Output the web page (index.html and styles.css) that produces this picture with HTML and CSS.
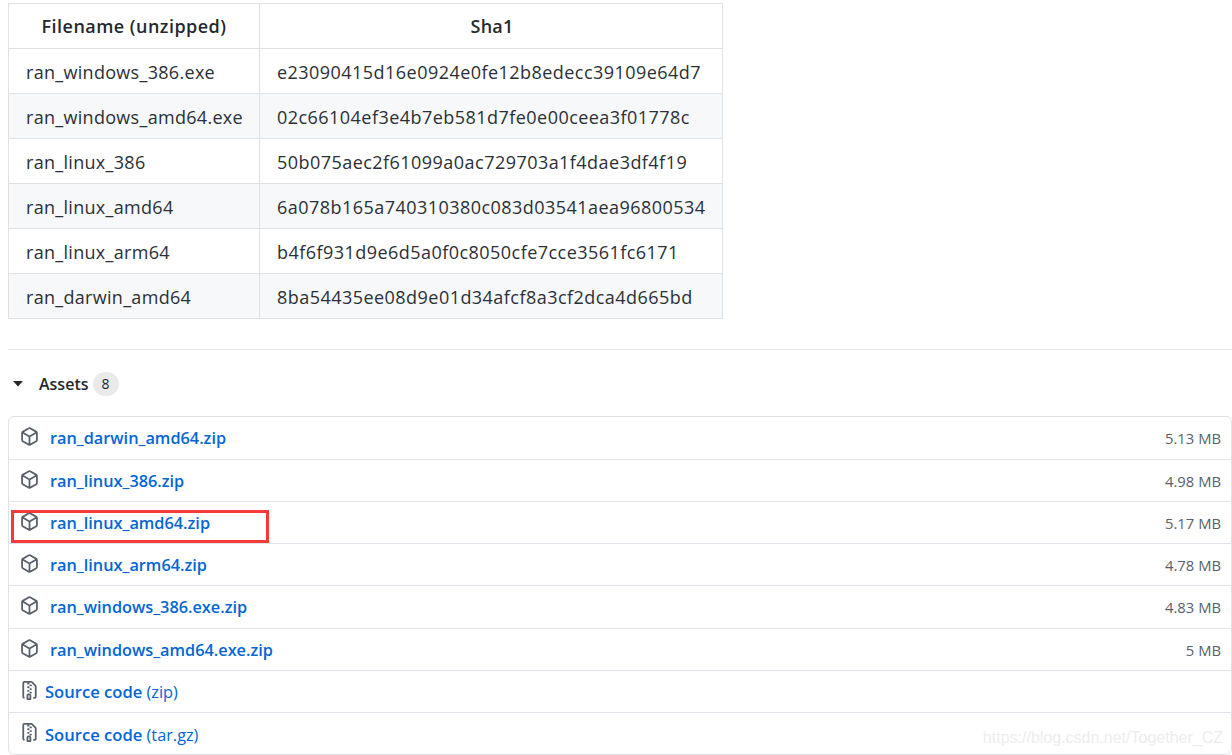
FILE: index.html
```html
<!DOCTYPE html>
<html lang="en">
<head>
<meta charset="utf-8">
<title>Release assets</title>
<link rel="stylesheet" href="styles.css">
</head>
<body>
<table class="sha">
<thead><tr><th>Filename (unzipped)</th><th>Sha1</th></tr></thead>
<tbody>
<tr><td>ran_windows_386.exe</td><td>e23090415d16e0924e0fe12b8edecc39109e64d7</td></tr>
<tr><td>ran_windows_amd64.exe</td><td>02c66104ef3e4b7eb581d7fe0e00ceea3f01778c</td></tr>
<tr><td>ran_linux_386</td><td>50b075aec2f61099a0ac729703a1f4dae3df4f19</td></tr>
<tr><td>ran_linux_amd64</td><td>6a078b165a740310380c083d03541aea96800534</td></tr>
<tr><td>ran_linux_arm64</td><td>b4f6f931d9e6d5a0f0c8050cfe7cce3561fc6171</td></tr>
<tr><td>ran_darwin_amd64</td><td>8ba54435ee08d9e01d34afcf8a3cf2dca4d665bd</td></tr>
</tbody>
</table>
<hr class="rule">
<div class="assets-head">
<svg class="caret" viewBox="0 0 10 6" width="10" height="6"><path d="M0 0h10L5 5.5z"/></svg>
<span class="assets-title">Assets</span>
<span class="counter">8</span>
</div>
<svg class="defs" width="0" height="0" aria-hidden="true">
<symbol id="pkg" viewBox="0 0 16 16"><path fill-rule="evenodd" d="M8.878.392a1.75 1.75 0 00-1.756 0l-5.25 3.045A1.75 1.75 0 001 4.951v6.098c0 .624.332 1.2.872 1.514l5.25 3.045a1.75 1.75 0 001.756 0l5.25-3.045c.54-.313.872-.89.872-1.514V4.951c0-.624-.332-1.2-.872-1.514L8.878.392zM7.875 1.69a.25.25 0 01.25 0l4.63 2.685L8 7.133 3.245 4.375l4.63-2.685zM2.5 5.677v5.372c0 .09.047.171.125.216l4.625 2.683V8.432L2.5 5.677zm6.25 8.271l4.625-2.683a.25.25 0 00.125-.216V5.677L8.75 8.432v5.516z"/></symbol>
<symbol id="zip" viewBox="0 0 16 16"><path fill-rule="evenodd" d="M3.5 1.75a.25.25 0 01.25-.25h3a.75.75 0 000 1.5h.5a.75.75 0 000-1.5h2.086a.25.25 0 01.177.073l2.914 2.914a.25.25 0 01.073.177v8.586a.25.25 0 01-.25.25h-.5a.75.75 0 000 1.5h.5A1.75 1.75 0 0014 13.25V4.664c0-.464-.184-.909-.513-1.237L10.573.513A1.75 1.75 0 009.336 0H3.75A1.75 1.75 0 002 1.75v11.5c0 .649.353 1.214.874 1.515a.75.75 0 10.752-1.298.25.25 0 01-.126-.217V1.75zM8.75 3a.75.75 0 000 1.5h.5a.75.75 0 000-1.5h-.5zM6 5.25a.75.75 0 01.75-.75h.5a.75.75 0 010 1.5h-.5A.75.75 0 016 5.25zm2 1.5A.75.75 0 018.75 6h.5a.75.75 0 010 1.5h-.5A.75.75 0 018 6.75zm-1.25.75a.75.75 0 000 1.5h.5a.75.75 0 000-1.5h-.5zM8 9.75A.75.75 0 018.75 9h.5a.75.75 0 010 1.5h-.5A.75.75 0 018 9.75zm-.75.75a1.75 1.75 0 00-1.75 1.75v3c0 .414.336.75.75.75h2.5a.75.75 0 00.75-.75v-3a1.75 1.75 0 00-1.75-1.75h-.5zM7 12.25a.25.25 0 01.25-.25h.5a.25.25 0 01.25.25v2.25H7v-2.25z"/></symbol>
</svg>
<div class="box">
<div class="row"><svg class="ico"><use href="#pkg"/></svg><a class="name">ran_darwin_amd64.zip</a><span class="size">5.13 MB</span></div>
<div class="row"><svg class="ico"><use href="#pkg"/></svg><a class="name">ran_linux_386.zip</a><span class="size">4.98 MB</span></div>
<div class="row"><svg class="ico"><use href="#pkg"/></svg><a class="name">ran_linux_amd64.zip</a><span class="size">5.17 MB</span></div>
<div class="row"><svg class="ico"><use href="#pkg"/></svg><a class="name">ran_linux_arm64.zip</a><span class="size">4.78 MB</span></div>
<div class="row"><svg class="ico"><use href="#pkg"/></svg><a class="name">ran_windows_386.exe.zip</a><span class="size">4.83 MB</span></div>
<div class="row"><svg class="ico"><use href="#pkg"/></svg><a class="name">ran_windows_amd64.exe.zip</a><span class="size">5 MB</span></div>
<div class="row src"><svg class="ico"><use href="#zip"/></svg><a class="name"><b>Source code</b> (zip)</a></div>
<div class="row src"><svg class="ico"><use href="#zip"/></svg><a class="name"><b>Source code</b> (tar.gz)</a></div>
<div class="highlight"></div>
<div class="mark">https://blog.csdn.net/Together_CZ</div>
</div>
</body>
</html>
```
FILE: styles.css
```css
html, body { margin: 0; padding: 0; background: #fff; }
body {
  width: 1232px;
  height: 755px;
  overflow: hidden;
  font-family: "Open Sans", "Noto Sans", sans-serif;
  color: #24292e;
  padding-top: 3px;
  box-sizing: border-box;
}
.sha {
  margin-left: 8px;
  border-collapse: collapse;
  table-layout: fixed;
  width: 715px;
  font-size: 18px;
}
.sha th, .sha td {
  border: 1px solid #dfe2e5;
  height: 45px;
  padding: 1px 0 0 17px;
  box-sizing: border-box;
  white-space: nowrap;
  overflow: hidden;
  letter-spacing: 0.3px;
}
.sha td + td { letter-spacing: 0.46px; }
.sha th { text-align: center; font-weight: 600; letter-spacing: 0.47px; padding: 0; }
.sha th + th { padding-left: 2px; letter-spacing: 0.2px; }
.sha th:first-child, .sha td:first-child { width: 251px; }
.sha td { color: #2b3036; }
.sha tbody tr:nth-child(even) td { background: #f6f8fa; }
.rule {
  border: 0;
  height: 1px;
  background: #e6e8eb;
  margin: 30px 0 0 8px;
}
.assets-head {
  display: flex;
  align-items: center;
  height: 26px;
  margin: 21px 0 19px 13px;
}
.caret { fill: #24292e; }
.assets-title { margin-left: 16px; font-size: 16px; font-weight: 600; }
.counter {
  margin-left: 4px;
  width: 26px;
  height: 24px;
  border-radius: 12px;
  background: #e9eaec;
  font-size: 14px;
  text-align: center;
  line-height: 24px;
}
.defs { position: absolute; }
.box {
  position: relative;
  margin-left: 8px;
  width: 1224px;
  height: 339px;
  box-sizing: border-box;
  border: 1px solid #dfe2e5;
  border-radius: 6px;
}
.row {
  display: flex;
  align-items: center;
  height: 42.25px;
  box-sizing: border-box;
  border-top: 1px solid #e1e4e8;
  padding: 1px 10px 0 11px;
}
.row:first-child { border-top: 0; height: 41.5px; }
.ico { width: 19px; height: 19px; fill: #586069; flex: none; margin-top: -3px; }
.name { margin-left: 11px; font-size: 16.3px; font-weight: 600; color: #0366d6; }
.name b { font-weight: 600; font-size: 16.6px; }
.src .ico { margin-right: -5px; }
.src .name { font-weight: 400; }
.size { margin-left: auto; font-size: 14.8px; color: #586069; }
.highlight {
  position: absolute;
  left: 2px;
  top: 93px;
  width: 258px;
  height: 33px;
  box-sizing: border-box;
  border: 3px solid #f63a3a;
}
.mark {
  position: absolute;
  right: 8px;
  top: 312px;
  font-family: "Liberation Sans", sans-serif;
  font-size: 16px;
  color: #ededed;
}
```
